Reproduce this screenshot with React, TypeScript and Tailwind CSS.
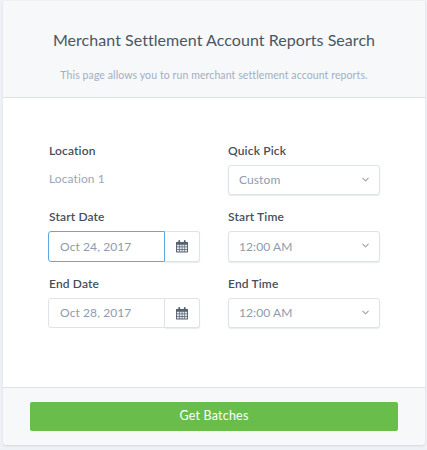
import { ChevronDown } from "lucide-react";

function CalendarIcon() {
  return (
    <svg width="12" height="13" viewBox="0 0 13 14" className="-ml-px text-[#56616f]">
      <path
        fill="currentColor"
        d="M0.5 2h2v-1a1 1 0 0 1 2 0v1h4v-1a1 1 0 0 1 2 0v1h2a.5.5 0 0 1 .5.5v10.5a.5.5 0 0 1-.5.5h-12a.5.5 0 0 1-.5-.5v-10.5a.5.5 0 0 1 .5-.5z"
      />
      <path
        fill="#e4e8ed"
        d="M1 5h2.3v2h-2.3zM4 5h2.2v2h-2.2zM6.9 5h2.2v2h-2.2zM9.8 5h2.2v2h-2.2zM1 7.7h2.3v2h-2.3zM4 7.7h2.2v2h-2.2zM6.9 7.7h2.2v2h-2.2zM9.8 7.7h2.2v2h-2.2zM1 10.4h2.3v2h-2.3zM4 10.4h2.2v2h-2.2zM6.9 10.4h2.2v2h-2.2zM9.8 10.4h2.2v2h-2.2z"
      />
    </svg>
  );
}

function Label({ text, inset }: { text: string; inset?: boolean }) {
  return (
    <div className={`text-[12px] leading-4 font-semibold text-[#454f5b] tracking-[0.15px] ${inset ? "pl-px" : ""}`}>
      {text}
    </div>
  );
}

function SelectBox({ value, tall }: { value: string; tall?: boolean }) {
  return (
    <div
      className={`mt-[6px] flex w-[152px] items-center justify-between rounded-[3px] border border-[#dde3ea] bg-white pl-[10px] pr-[8px] text-[12px] text-[#8e9cae] shadow-[0_1px_1px_rgba(60,80,110,0.12)] ${
        tall ? "h-[31px]" : "h-[30px]"
      }`}
    >
      <span className="tracking-[0.1px]">{value}</span>
      <ChevronDown size={11} strokeWidth={2.4} className="-mt-[2px] text-[#98a5b5]" />
    </div>
  );
}

function DateBox({ value, focused }: { value: string; focused?: boolean }) {
  return (
    <div className={`mt-[6px] flex w-[152px] ${focused ? "h-[31px]" : "h-[30px]"}`}>
      <div
        className={`flex w-[117px] items-center rounded-l-[3px] border pl-[11px] text-[12px] text-[#8e9cae] tracking-[0.1px] ${
          focused ? "border-[#5aa9e6]" : "border-[#dde3ea]"
        }`}
      >
        {value}
      </div>
      <div className="flex w-[35px] items-center justify-center rounded-r-[3px] border border-l-0 border-[#dde3ea] bg-white shadow-[0_1px_1px_rgba(60,80,110,0.12)]">
        <CalendarIcon />
      </div>
    </div>
  );
}

export default function App() {
  return (
    <div className="h-[450px] w-[427px] bg-[#eef1f5] px-[3px] pt-px font-['Lato','Open_Sans',sans-serif]">
      <div className="flex h-[444px] w-[422px] flex-col rounded-b-[3px] bg-[#f6f8fa] shadow-[0_1px_2px_rgba(60,80,110,0.15)]">
        <div className="flex h-[96px] shrink-0 flex-col items-center pt-[29px]">
          <h1 className="text-[16px] leading-5 text-[#4b5664] tracking-[0.05px]">Merchant Settlement Account Reports Search</h1>
          <p className="mt-[19px] text-[10.5px] leading-3 text-[#a3afbf] tracking-[0.1px]">
            This page allows you to run merchant settlement account reports.
          </p>
        </div>
        <div className="grid h-[291px] shrink-0 grid-cols-[180px_152px] content-start gap-y-[14px] border-y border-[#dde3ea] bg-white pl-[45px] pt-[45px]">
          <div>
            <Label text="Location" inset />
            <div className="mt-[12px] pl-px text-[12px] leading-4 text-[#9aa7b8] tracking-[0.1px]">Location 1</div>
          </div>
          <div>
            <Label text="Quick Pick" />
            <SelectBox value="Custom" />
          </div>
          <div>
            <Label text="Start Date" inset />
            <DateBox value="Oct 24, 2017" focused />
          </div>
          <div>
            <Label text="Start Time" />
            <SelectBox value="12:00 AM" tall />
          </div>
          <div>
            <Label text="End Date" inset />
            <DateBox value="Oct 28, 2017" />
          </div>
          <div>
            <Label text="End Time" />
            <SelectBox value="12:00 AM" />
          </div>
        </div>
        <div className="flex flex-1 items-start px-[27px] pt-[14px]">
          <button className="h-[29px] w-[368px] rounded-[2px] bg-[#69bd4b] text-[12.5px] text-white tracking-[0.2px]">Get Batches</button>
        </div>
      </div>
    </div>
  );
}
